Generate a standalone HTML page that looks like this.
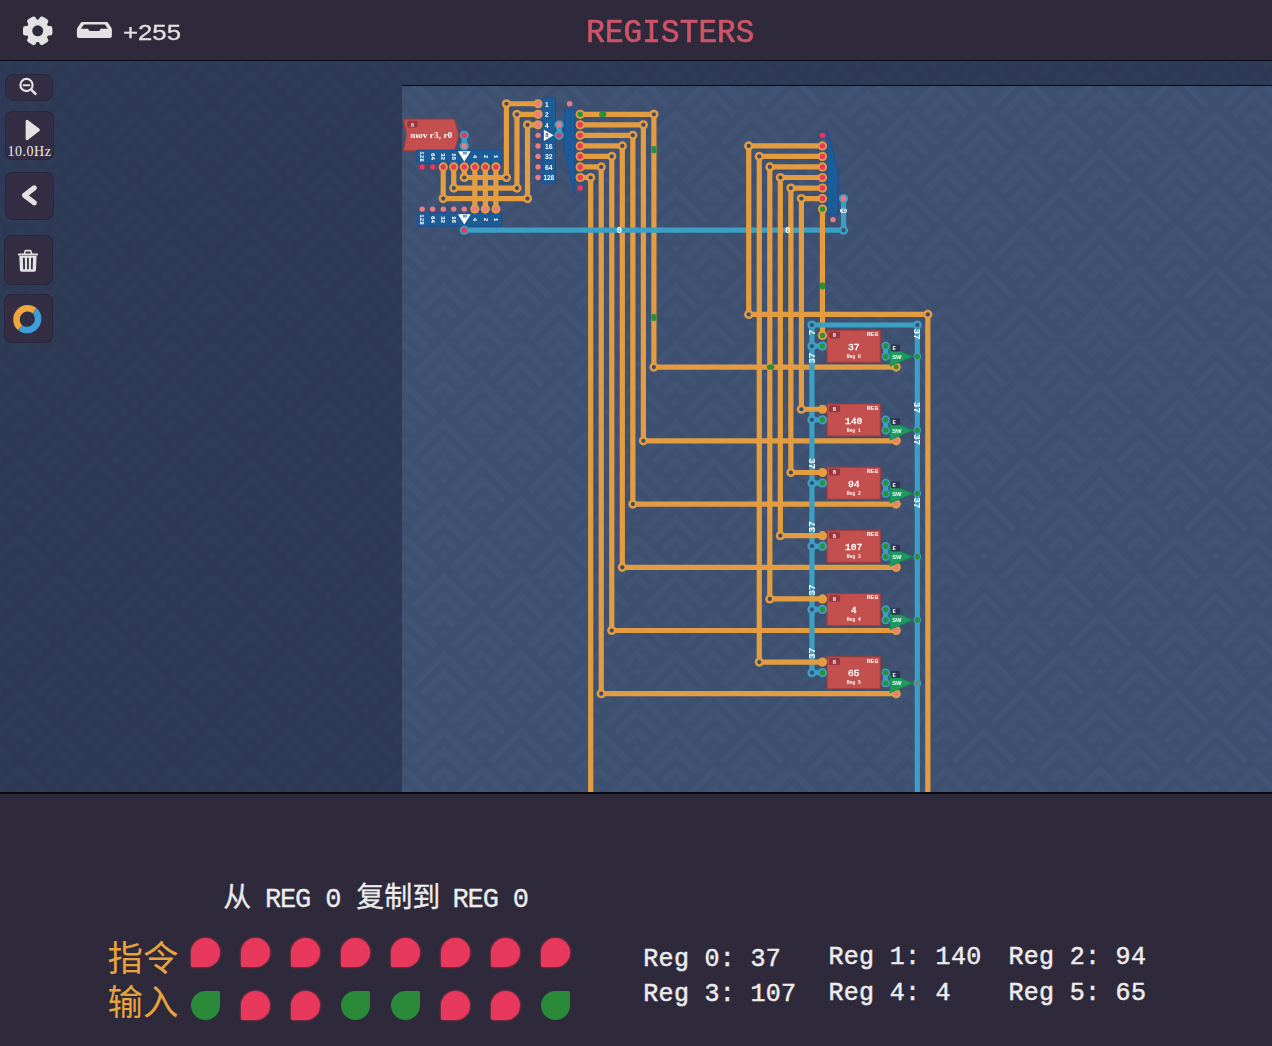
<!DOCTYPE html>
<html lang="zh">
<head>
<meta charset="utf-8">
<title>REGISTERS</title>
<style>
html,body{margin:0;padding:0;background:#2e2a3b;}
body{width:1272px;height:1046px;position:relative;overflow:hidden;font-family:"Liberation Sans","Noto Sans CJK SC",sans-serif;}
#hdr{position:absolute;left:0;top:0;width:1272px;height:60px;background:#2e2a3b;border-bottom:1.5px solid #0c0b12;box-sizing:content-box;}
#title{position:absolute;left:586.2px;top:16.3px;font-family:"Liberation Mono",monospace;font-weight:normal;-webkit-text-stroke:0.65px #cf5468;font-size:31px;letter-spacing:0.1px;color:#cf5468;line-height:36px;transform:scaleY(1.05);transform-origin:50% 50%;}
#score{position:absolute;left:123px;top:17.8px;font-size:22px;-webkit-text-stroke:0.3px #e2e2e2;transform:scaleX(1.17);transform-origin:0 50%;color:#e2e2e2;line-height:30px;}
#canvas{position:absolute;left:0;top:61px;width:1272px;height:732px;}
#bottom{position:absolute;left:0;top:792px;width:1272px;height:254px;background:#2e2a3b;border-top:2px solid #0b0a11;}
.btn{position:absolute;background:#332e43;border-radius:8px;box-shadow:inset 0 0 0 1px #2a2739;}
#hz{position:absolute;left:5.1px;width:48.7px;top:144.4px;text-align:center;font-family:"Liberation Serif",serif;font-size:14px;letter-spacing:0.55px;color:#ececec;line-height:16px;}
#desc{position:absolute;left:223.2px;top:881.8px;font-family:"Liberation Mono","Noto Sans CJK SC",monospace;font-size:27px;letter-spacing:-1.1px;-webkit-text-stroke:0.3px #ececec;color:#ececec;line-height:36px;white-space:pre;}
.cj{font-size:28px;letter-spacing:0;}
.lbl{position:absolute;left:107.6px;font-family:"Liberation Sans","Noto Sans CJK SC",sans-serif;font-size:35.4px;color:#e8a33d;line-height:44px;white-space:pre;}
.bit{position:absolute;width:29px;height:29px;}
.r{background:#e8395d;border-radius:50% 50% 50% 6%;box-shadow:0 0 2.5px #d8304f;}
.g{background:#2a8a3a;border-radius:50% 6% 50% 50%;}
.reg{position:absolute;font-family:"Liberation Mono",monospace;font-weight:normal;-webkit-text-stroke:0.5px #ececec;font-size:25px;letter-spacing:0.3px;color:#ececec;line-height:30px;white-space:pre;}
</style>
</head>
<body>
<div id="canvas">
<svg width="1272" height="732" viewBox="0 61 1272 732" style="position:absolute;left:0;top:0;display:block">
<defs>
<filter id="soft" x="0" y="0" width="1272" height="800" filterUnits="userSpaceOnUse"><feGaussianBlur stdDeviation="0.45"/></filter>
<pattern id="pd" patternUnits="userSpaceOnUse" x="57.8" y="36.6" width="77.2" height="77.2"><path d="M-30.10 30.10 L0.00 0.00 L30.10 30.10 M-20.80 39.90 L0.00 19.10 L20.80 39.90 M-11.10 49.30 L0.00 38.20 L11.10 49.30 M47.10 30.10 L77.20 0.00 L107.30 30.10 M56.40 39.90 L77.20 19.10 L98.00 39.90 M66.10 49.30 L77.20 38.20 L88.30 49.30 M-30.10 107.30 L0.00 77.20 L30.10 107.30 M-20.80 117.10 L0.00 96.30 L20.80 117.10 M-11.10 126.50 L0.00 115.40 L11.10 126.50 M47.10 107.30 L77.20 77.20 L107.30 107.30 M56.40 117.10 L77.20 96.30 L98.00 117.10 M66.10 126.50 L77.20 115.40 L88.30 126.50 M-30.10 -47.10 L0.00 -77.20 L30.10 -47.10 M-20.80 -37.30 L0.00 -58.10 L20.80 -37.30 M-11.10 -27.90 L0.00 -39.00 L11.10 -27.90 M47.10 -47.10 L77.20 -77.20 L107.30 -47.10 M56.40 -37.30 L77.20 -58.10 L98.00 -37.30 M66.10 -27.90 L77.20 -39.00 L88.30 -27.90 M8.50 68.70 L38.60 38.60 L68.70 68.70 M17.80 78.50 L38.60 57.70 L59.40 78.50 M27.50 87.90 L38.60 76.80 L49.70 87.90 M8.50 -8.50 L38.60 -38.60 L68.70 -8.50 M17.80 1.30 L38.60 -19.50 L59.40 1.30 M27.50 10.70 L38.60 -0.40 L49.70 10.70 M-68.70 68.70 L-38.60 38.60 L-8.50 68.70 M-59.40 78.50 L-38.60 57.70 L-17.80 78.50 M-49.70 87.90 L-38.60 76.80 L-27.50 87.90 M85.70 68.70 L115.80 38.60 L145.90 68.70 M95.00 78.50 L115.80 57.70 L136.60 78.50 M104.70 87.90 L115.80 76.80 L126.90 87.90 M8.50 145.90 L38.60 115.80 L68.70 145.90 M17.80 155.70 L38.60 134.90 L59.40 155.70 M27.50 165.10 L38.60 154.00 L49.70 165.10 M-68.70 -8.50 L-38.60 -38.60 L-8.50 -8.50 M-59.40 1.30 L-38.60 -19.50 L-17.80 1.30 M-49.70 10.70 L-38.60 -0.40 L-27.50 10.70 M85.70 -8.50 L115.80 -38.60 L145.90 -8.50 M95.00 1.30 L115.80 -19.50 L136.60 1.30 M104.70 10.70 L115.80 -0.40 L126.90 10.70" fill="none" stroke="#2f3c57" stroke-width="6.2" stroke-linejoin="miter" stroke-linecap="butt"/><g fill="#2f3c57"><rect x="-3.00" y="53.80" width="6" height="6" transform="rotate(45 0.00 56.80)"/><rect x="74.20" y="53.80" width="6" height="6" transform="rotate(45 77.20 56.80)"/><rect x="-3.00" y="131.00" width="6" height="6" transform="rotate(45 0.00 134.00)"/><rect x="74.20" y="131.00" width="6" height="6" transform="rotate(45 77.20 134.00)"/><rect x="-3.00" y="-23.40" width="6" height="6" transform="rotate(45 0.00 -20.40)"/><rect x="74.20" y="-23.40" width="6" height="6" transform="rotate(45 77.20 -20.40)"/><rect x="35.60" y="92.40" width="6" height="6" transform="rotate(45 38.60 95.40)"/><rect x="35.60" y="15.20" width="6" height="6" transform="rotate(45 38.60 18.20)"/><rect x="-41.60" y="92.40" width="6" height="6" transform="rotate(45 -38.60 95.40)"/><rect x="112.80" y="92.40" width="6" height="6" transform="rotate(45 115.80 95.40)"/><rect x="35.60" y="169.60" width="6" height="6" transform="rotate(45 38.60 172.60)"/><rect x="-41.60" y="15.20" width="6" height="6" transform="rotate(45 -38.60 18.20)"/><rect x="112.80" y="15.20" width="6" height="6" transform="rotate(45 115.80 18.20)"/></g></pattern>
<pattern id="pl" patternUnits="userSpaceOnUse" x="57.8" y="36.6" width="77.2" height="77.2"><path d="M-30.10 30.10 L0.00 0.00 L30.10 30.10 M-20.80 39.90 L0.00 19.10 L20.80 39.90 M-11.10 49.30 L0.00 38.20 L11.10 49.30 M47.10 30.10 L77.20 0.00 L107.30 30.10 M56.40 39.90 L77.20 19.10 L98.00 39.90 M66.10 49.30 L77.20 38.20 L88.30 49.30 M-30.10 107.30 L0.00 77.20 L30.10 107.30 M-20.80 117.10 L0.00 96.30 L20.80 117.10 M-11.10 126.50 L0.00 115.40 L11.10 126.50 M47.10 107.30 L77.20 77.20 L107.30 107.30 M56.40 117.10 L77.20 96.30 L98.00 117.10 M66.10 126.50 L77.20 115.40 L88.30 126.50 M-30.10 -47.10 L0.00 -77.20 L30.10 -47.10 M-20.80 -37.30 L0.00 -58.10 L20.80 -37.30 M-11.10 -27.90 L0.00 -39.00 L11.10 -27.90 M47.10 -47.10 L77.20 -77.20 L107.30 -47.10 M56.40 -37.30 L77.20 -58.10 L98.00 -37.30 M66.10 -27.90 L77.20 -39.00 L88.30 -27.90 M8.50 68.70 L38.60 38.60 L68.70 68.70 M17.80 78.50 L38.60 57.70 L59.40 78.50 M27.50 87.90 L38.60 76.80 L49.70 87.90 M8.50 -8.50 L38.60 -38.60 L68.70 -8.50 M17.80 1.30 L38.60 -19.50 L59.40 1.30 M27.50 10.70 L38.60 -0.40 L49.70 10.70 M-68.70 68.70 L-38.60 38.60 L-8.50 68.70 M-59.40 78.50 L-38.60 57.70 L-17.80 78.50 M-49.70 87.90 L-38.60 76.80 L-27.50 87.90 M85.70 68.70 L115.80 38.60 L145.90 68.70 M95.00 78.50 L115.80 57.70 L136.60 78.50 M104.70 87.90 L115.80 76.80 L126.90 87.90 M8.50 145.90 L38.60 115.80 L68.70 145.90 M17.80 155.70 L38.60 134.90 L59.40 155.70 M27.50 165.10 L38.60 154.00 L49.70 165.10 M-68.70 -8.50 L-38.60 -38.60 L-8.50 -8.50 M-59.40 1.30 L-38.60 -19.50 L-17.80 1.30 M-49.70 10.70 L-38.60 -0.40 L-27.50 10.70 M85.70 -8.50 L115.80 -38.60 L145.90 -8.50 M95.00 1.30 L115.80 -19.50 L136.60 1.30 M104.70 10.70 L115.80 -0.40 L126.90 10.70" fill="none" stroke="#425476" stroke-width="6.2" stroke-linejoin="miter" stroke-linecap="butt"/><g fill="#425476"><rect x="-3.00" y="53.80" width="6" height="6" transform="rotate(45 0.00 56.80)"/><rect x="74.20" y="53.80" width="6" height="6" transform="rotate(45 77.20 56.80)"/><rect x="-3.00" y="131.00" width="6" height="6" transform="rotate(45 0.00 134.00)"/><rect x="74.20" y="131.00" width="6" height="6" transform="rotate(45 77.20 134.00)"/><rect x="-3.00" y="-23.40" width="6" height="6" transform="rotate(45 0.00 -20.40)"/><rect x="74.20" y="-23.40" width="6" height="6" transform="rotate(45 77.20 -20.40)"/><rect x="35.60" y="92.40" width="6" height="6" transform="rotate(45 38.60 95.40)"/><rect x="35.60" y="15.20" width="6" height="6" transform="rotate(45 38.60 18.20)"/><rect x="-41.60" y="92.40" width="6" height="6" transform="rotate(45 -38.60 95.40)"/><rect x="112.80" y="92.40" width="6" height="6" transform="rotate(45 115.80 95.40)"/><rect x="35.60" y="169.60" width="6" height="6" transform="rotate(45 38.60 172.60)"/><rect x="-41.60" y="15.20" width="6" height="6" transform="rotate(45 -38.60 18.20)"/><rect x="112.80" y="15.20" width="6" height="6" transform="rotate(45 115.80 18.20)"/></g></pattern>
</defs>
<rect x="0" y="61" width="1272" height="732" fill="#2e3a55"/>
<rect x="0" y="61" width="1272" height="732" fill="url(#pd)"/>
<rect x="402" y="84.9" width="900" height="3" fill="#0e111c"/>
<rect x="402" y="86.1" width="900" height="720" fill="#3e5070"/>
<rect x="402" y="86.1" width="900" height="720" fill="url(#pl)"/>
<g filter="url(#soft)">
<g id="w-orange-a">
<path d="M443.21 166.96 L443.21 198.56 L527.49 198.56 L527.49 124.82 L538.03 124.82" fill="none" stroke="#e39d41" stroke-width="5.2" stroke-linejoin="round" stroke-linecap="butt"/>
<path d="M453.75 166.96 L453.75 188.03 L516.96 188.03 L516.96 114.28 L538.03 114.28" fill="none" stroke="#e39d41" stroke-width="5.2" stroke-linejoin="round" stroke-linecap="butt"/>
<path d="M464.28 166.96 L464.28 177.49 L506.42 177.49 L506.42 103.75 L538.03 103.75" fill="none" stroke="#e39d41" stroke-width="5.2" stroke-linejoin="round" stroke-linecap="butt"/>
<path d="M474.82 166.96 L474.82 209.10" fill="none" stroke="#e39d41" stroke-width="5.2" stroke-linejoin="round" stroke-linecap="butt"/>
<path d="M485.35 166.96 L485.35 209.10" fill="none" stroke="#e39d41" stroke-width="5.2" stroke-linejoin="round" stroke-linecap="butt"/>
<path d="M495.89 166.96 L495.89 209.10" fill="none" stroke="#e39d41" stroke-width="5.2" stroke-linejoin="round" stroke-linecap="butt"/>
<circle cx="443.21" cy="198.56" r="4.6" fill="#e39d41"/>
<circle cx="443.21" cy="198.56" r="2.1" fill="#3d4b6c"/>
<circle cx="527.49" cy="198.56" r="4.6" fill="#e39d41"/>
<circle cx="527.49" cy="198.56" r="2.1" fill="#3d4b6c"/>
<circle cx="527.49" cy="124.82" r="4.6" fill="#e39d41"/>
<circle cx="527.49" cy="124.82" r="2.1" fill="#3d4b6c"/>
<circle cx="453.75" cy="188.03" r="4.6" fill="#e39d41"/>
<circle cx="453.75" cy="188.03" r="2.1" fill="#3d4b6c"/>
<circle cx="516.96" cy="188.03" r="4.6" fill="#e39d41"/>
<circle cx="516.96" cy="188.03" r="2.1" fill="#3d4b6c"/>
<circle cx="516.96" cy="114.28" r="4.6" fill="#e39d41"/>
<circle cx="516.96" cy="114.28" r="2.1" fill="#3d4b6c"/>
<circle cx="464.28" cy="177.49" r="4.6" fill="#e39d41"/>
<circle cx="464.28" cy="177.49" r="2.1" fill="#3d4b6c"/>
<circle cx="506.42" cy="177.49" r="4.6" fill="#e39d41"/>
<circle cx="506.42" cy="177.49" r="2.1" fill="#3d4b6c"/>
<circle cx="506.42" cy="103.75" r="4.6" fill="#e39d41"/>
<circle cx="506.42" cy="103.75" r="2.1" fill="#3d4b6c"/>
<path d="M580.17 114.28 L653.91 114.28 L653.91 367.12 L896.22 367.12" fill="none" stroke="#e39d41" stroke-width="5.2" stroke-linejoin="round" stroke-linecap="butt"/>
<circle cx="653.91" cy="114.28" r="4.6" fill="#e39d41"/>
<circle cx="653.91" cy="114.28" r="2.1" fill="#3d4b6c"/>
<circle cx="653.91" cy="367.12" r="4.6" fill="#e39d41"/>
<circle cx="653.91" cy="367.12" r="2.1" fill="#3d4b6c"/>
<path d="M580.17 124.82 L643.38 124.82 L643.38 440.87 L896.22 440.87" fill="none" stroke="#e39d41" stroke-width="5.2" stroke-linejoin="round" stroke-linecap="butt"/>
<circle cx="643.38" cy="124.82" r="4.6" fill="#e39d41"/>
<circle cx="643.38" cy="124.82" r="2.1" fill="#3d4b6c"/>
<circle cx="643.38" cy="440.87" r="4.6" fill="#e39d41"/>
<circle cx="643.38" cy="440.87" r="2.1" fill="#3d4b6c"/>
<path d="M580.17 135.35 L632.84 135.35 L632.84 504.08 L896.22 504.08" fill="none" stroke="#e39d41" stroke-width="5.2" stroke-linejoin="round" stroke-linecap="butt"/>
<circle cx="632.84" cy="135.35" r="4.6" fill="#e39d41"/>
<circle cx="632.84" cy="135.35" r="2.1" fill="#3d4b6c"/>
<circle cx="632.84" cy="504.08" r="4.6" fill="#e39d41"/>
<circle cx="632.84" cy="504.08" r="2.1" fill="#3d4b6c"/>
<path d="M580.17 145.89 L622.31 145.89 L622.31 567.29 L896.22 567.29" fill="none" stroke="#e39d41" stroke-width="5.2" stroke-linejoin="round" stroke-linecap="butt"/>
<circle cx="622.31" cy="145.89" r="4.6" fill="#e39d41"/>
<circle cx="622.31" cy="145.89" r="2.1" fill="#3d4b6c"/>
<circle cx="622.31" cy="567.29" r="4.6" fill="#e39d41"/>
<circle cx="622.31" cy="567.29" r="2.1" fill="#3d4b6c"/>
<path d="M580.17 156.42 L611.77 156.42 L611.77 630.50 L896.22 630.50" fill="none" stroke="#e39d41" stroke-width="5.2" stroke-linejoin="round" stroke-linecap="butt"/>
<circle cx="611.77" cy="156.42" r="4.6" fill="#e39d41"/>
<circle cx="611.77" cy="156.42" r="2.1" fill="#3d4b6c"/>
<circle cx="611.77" cy="630.50" r="4.6" fill="#e39d41"/>
<circle cx="611.77" cy="630.50" r="2.1" fill="#3d4b6c"/>
<path d="M580.17 166.96 L601.24 166.96 L601.24 693.71 L896.22 693.71" fill="none" stroke="#e39d41" stroke-width="5.2" stroke-linejoin="round" stroke-linecap="butt"/>
<circle cx="601.24" cy="166.96" r="4.6" fill="#e39d41"/>
<circle cx="601.24" cy="166.96" r="2.1" fill="#3d4b6c"/>
<circle cx="601.24" cy="693.71" r="4.6" fill="#e39d41"/>
<circle cx="601.24" cy="693.71" r="2.1" fill="#3d4b6c"/>
<path d="M580.17 177.49 L590.70 177.49 L590.70 794.00" fill="none" stroke="#e39d41" stroke-width="5.2" stroke-linejoin="round" stroke-linecap="butt"/>
<circle cx="590.70" cy="177.49" r="4.6" fill="#e39d41"/>
<circle cx="590.70" cy="177.49" r="2.1" fill="#3d4b6c"/>
</g>
<g id="w-cyan-a">
<path d="M464.28 230.17 L843.54 230.17 L843.54 198.56" fill="none" stroke="#3aa0c4" stroke-width="5.2" stroke-linejoin="round" stroke-linecap="butt"/>
<circle cx="843.54" cy="230.17" r="4.6" fill="#3aa0c4"/>
<circle cx="843.54" cy="230.17" r="2.1" fill="#3d4b6c"/>
</g>
<g id="w-orange-a2">
<path d="M822.47 209.10 L822.47 335.52" fill="none" stroke="#e39d41" stroke-width="5.2" stroke-linejoin="round" stroke-linecap="butt"/>
<path d="M748.73 145.89 L748.73 314.45 L927.82 314.45 L927.82 794.00" fill="none" stroke="#e39d41" stroke-width="5.2" stroke-linejoin="round" stroke-linecap="butt"/>
<path d="M822.47 145.89 L748.73 145.89" fill="none" stroke="#e39d41" stroke-width="5.2" stroke-linejoin="round" stroke-linecap="butt"/>
<circle cx="748.73" cy="145.89" r="4.6" fill="#e39d41"/>
<circle cx="748.73" cy="145.89" r="2.1" fill="#3d4b6c"/>
<circle cx="748.73" cy="314.45" r="4.6" fill="#e39d41"/>
<circle cx="748.73" cy="314.45" r="2.1" fill="#3d4b6c"/>
<circle cx="927.82" cy="314.45" r="4.6" fill="#e39d41"/>
<circle cx="927.82" cy="314.45" r="2.1" fill="#3d4b6c"/>
</g>
<g id="w-cyan-b">
<path d="M811.94 672.64 L811.94 324.99 L917.29 324.99 L917.29 794.00" fill="none" stroke="#3aa0c4" stroke-width="5.2" stroke-linejoin="round" stroke-linecap="butt"/>
<path d="M811.94 346.06 L822.47 346.06" fill="none" stroke="#3aa0c4" stroke-width="5.2" stroke-linejoin="round" stroke-linecap="butt"/>
<path d="M885.68 346.06 L885.68 356.59" fill="none" stroke="#3aa0c4" stroke-width="5.2" stroke-linejoin="round" stroke-linecap="butt"/>
<path d="M811.94 419.80 L822.47 419.80" fill="none" stroke="#3aa0c4" stroke-width="5.2" stroke-linejoin="round" stroke-linecap="butt"/>
<path d="M885.68 419.80 L885.68 430.33" fill="none" stroke="#3aa0c4" stroke-width="5.2" stroke-linejoin="round" stroke-linecap="butt"/>
<path d="M811.94 483.01 L822.47 483.01" fill="none" stroke="#3aa0c4" stroke-width="5.2" stroke-linejoin="round" stroke-linecap="butt"/>
<path d="M885.68 483.01 L885.68 493.54" fill="none" stroke="#3aa0c4" stroke-width="5.2" stroke-linejoin="round" stroke-linecap="butt"/>
<path d="M811.94 546.22 L822.47 546.22" fill="none" stroke="#3aa0c4" stroke-width="5.2" stroke-linejoin="round" stroke-linecap="butt"/>
<path d="M885.68 546.22 L885.68 556.75" fill="none" stroke="#3aa0c4" stroke-width="5.2" stroke-linejoin="round" stroke-linecap="butt"/>
<path d="M811.94 609.43 L822.47 609.43" fill="none" stroke="#3aa0c4" stroke-width="5.2" stroke-linejoin="round" stroke-linecap="butt"/>
<path d="M885.68 609.43 L885.68 619.96" fill="none" stroke="#3aa0c4" stroke-width="5.2" stroke-linejoin="round" stroke-linecap="butt"/>
<path d="M811.94 672.64 L822.47 672.64" fill="none" stroke="#3aa0c4" stroke-width="5.2" stroke-linejoin="round" stroke-linecap="butt"/>
<path d="M885.68 672.64 L885.68 683.17" fill="none" stroke="#3aa0c4" stroke-width="5.2" stroke-linejoin="round" stroke-linecap="butt"/>
<circle cx="811.94" cy="324.99" r="4.6" fill="#3aa0c4"/>
<circle cx="811.94" cy="324.99" r="2.1" fill="#3d4b6c"/>
<circle cx="917.29" cy="324.99" r="4.6" fill="#3aa0c4"/>
<circle cx="917.29" cy="324.99" r="2.1" fill="#3d4b6c"/>
<circle cx="811.94" cy="346.06" r="4.6" fill="#3aa0c4"/>
<circle cx="811.94" cy="346.06" r="2.1" fill="#3d4b6c"/>
<circle cx="811.94" cy="419.80" r="4.6" fill="#3aa0c4"/>
<circle cx="811.94" cy="419.80" r="2.1" fill="#3d4b6c"/>
<circle cx="811.94" cy="483.01" r="4.6" fill="#3aa0c4"/>
<circle cx="811.94" cy="483.01" r="2.1" fill="#3d4b6c"/>
<circle cx="811.94" cy="546.22" r="4.6" fill="#3aa0c4"/>
<circle cx="811.94" cy="546.22" r="2.1" fill="#3d4b6c"/>
<circle cx="811.94" cy="609.43" r="4.6" fill="#3aa0c4"/>
<circle cx="811.94" cy="609.43" r="2.1" fill="#3d4b6c"/>
<circle cx="811.94" cy="672.64" r="4.6" fill="#3aa0c4"/>
<circle cx="811.94" cy="672.64" r="2.1" fill="#3d4b6c"/>
</g>
<g id="w-orange-b">
<path d="M822.47 198.56 L801.40 198.56 L801.40 409.26 L822.47 409.26" fill="none" stroke="#e39d41" stroke-width="5.2" stroke-linejoin="round" stroke-linecap="butt"/>
<circle cx="801.40" cy="198.56" r="4.6" fill="#e39d41"/>
<circle cx="801.40" cy="198.56" r="2.1" fill="#3d4b6c"/>
<circle cx="801.40" cy="409.26" r="4.6" fill="#e39d41"/>
<circle cx="801.40" cy="409.26" r="2.1" fill="#3d4b6c"/>
<path d="M822.47 188.03 L790.87 188.03 L790.87 472.48 L822.47 472.48" fill="none" stroke="#e39d41" stroke-width="5.2" stroke-linejoin="round" stroke-linecap="butt"/>
<circle cx="790.87" cy="188.03" r="4.6" fill="#e39d41"/>
<circle cx="790.87" cy="188.03" r="2.1" fill="#3d4b6c"/>
<circle cx="790.87" cy="472.48" r="4.6" fill="#e39d41"/>
<circle cx="790.87" cy="472.48" r="2.1" fill="#3d4b6c"/>
<path d="M822.47 177.49 L780.33 177.49 L780.33 535.68 L822.47 535.68" fill="none" stroke="#e39d41" stroke-width="5.2" stroke-linejoin="round" stroke-linecap="butt"/>
<circle cx="780.33" cy="177.49" r="4.6" fill="#e39d41"/>
<circle cx="780.33" cy="177.49" r="2.1" fill="#3d4b6c"/>
<circle cx="780.33" cy="535.68" r="4.6" fill="#e39d41"/>
<circle cx="780.33" cy="535.68" r="2.1" fill="#3d4b6c"/>
<path d="M822.47 166.96 L769.80 166.96 L769.80 598.89 L822.47 598.89" fill="none" stroke="#e39d41" stroke-width="5.2" stroke-linejoin="round" stroke-linecap="butt"/>
<circle cx="769.80" cy="166.96" r="4.6" fill="#e39d41"/>
<circle cx="769.80" cy="166.96" r="2.1" fill="#3d4b6c"/>
<circle cx="769.80" cy="598.89" r="4.6" fill="#e39d41"/>
<circle cx="769.80" cy="598.89" r="2.1" fill="#3d4b6c"/>
<path d="M822.47 156.42 L759.26 156.42 L759.26 662.11 L822.47 662.11" fill="none" stroke="#e39d41" stroke-width="5.2" stroke-linejoin="round" stroke-linecap="butt"/>
<circle cx="759.26" cy="156.42" r="4.6" fill="#e39d41"/>
<circle cx="759.26" cy="156.42" r="2.1" fill="#3d4b6c"/>
<circle cx="759.26" cy="662.11" r="4.6" fill="#e39d41"/>
<circle cx="759.26" cy="662.11" r="2.1" fill="#3d4b6c"/>
</g>
<g id="w-cyan-c">
<path d="M464.28 135.35 L464.28 145.89" fill="none" stroke="#3aa0c4" stroke-width="5.2" stroke-linejoin="round" stroke-linecap="butt"/>
<path d="M559.10 124.82 L559.10 135.35" fill="none" stroke="#3aa0c4" stroke-width="5.2" stroke-linejoin="round" stroke-linecap="butt"/>
</g>
<g id="marks" fill="#2e8f3a">
<rect x="599.2" y="111.7" width="7.2" height="5.2" rx="2"/>
<rect x="651.3" y="146.0" width="5.2" height="7.2" rx="2"/>
<rect x="651.3" y="313.9" width="5.2" height="7.2" rx="2"/>
<rect x="767.0" y="364.5" width="7.2" height="5.2" rx="2"/>
<rect x="819.9" y="282.4" width="5.2" height="7.2" rx="2"/>
</g>
<g id="prerings">
<circle cx="896.22" cy="367.12" r="4.6" fill="#e39d41"/>
<circle cx="896.22" cy="440.87" r="4.6" fill="#e39d41"/>
<circle cx="896.22" cy="504.08" r="4.6" fill="#e39d41"/>
<circle cx="896.22" cy="567.29" r="4.6" fill="#e39d41"/>
<circle cx="896.22" cy="630.50" r="4.6" fill="#e39d41"/>
<circle cx="896.22" cy="693.71" r="4.6" fill="#e39d41"/>
</g>
<g id="components">
<polygon points="403.3,119.1 454.3,119.1 458.8,135.1 454.5,150.7 403.3,150.7 406.5,135.1" fill="#c44f4f" stroke="#a33a3a" stroke-width="1"/>
<rect x="407.4" y="120.8" width="10.3" height="7" rx="1.5" fill="#96373f"/>
<text x="412.5" y="126.8" font-family="'Liberation Serif',serif" font-size="6.6" fill="#f4dede" text-anchor="middle" font-weight="bold">8</text>
<text x="410.3" y="138.3" font-family="'Liberation Serif',serif" font-size="8.6" fill="#fff" font-weight="bold" textLength="42" lengthAdjust="spacingAndGlyphs">mov r3, r0</text>
<rect x="416.9" y="150.0" width="84.8" height="13.2" fill="#1f5d97" stroke="#1c4a9c" stroke-width="0.8"/>
<text transform="translate(420.2,156.6) rotate(90)" font-family="'Liberation Mono',monospace" font-size="5.6" fill="#fff" font-weight="bold" text-anchor="middle" textLength="10.5" lengthAdjust="spacingAndGlyphs">128</text>
<text transform="translate(430.8,156.6) rotate(90)" font-family="'Liberation Mono',monospace" font-size="5.6" fill="#fff" font-weight="bold" text-anchor="middle" textLength="7.2" lengthAdjust="spacingAndGlyphs">64</text>
<text transform="translate(441.3,156.6) rotate(90)" font-family="'Liberation Mono',monospace" font-size="5.6" fill="#fff" font-weight="bold" text-anchor="middle" textLength="7.2" lengthAdjust="spacingAndGlyphs">32</text>
<text transform="translate(451.9,156.6) rotate(90)" font-family="'Liberation Mono',monospace" font-size="5.6" fill="#fff" font-weight="bold" text-anchor="middle" textLength="7.2" lengthAdjust="spacingAndGlyphs">16</text>
<polygon points="457.9,151.2 470.7,151.2 464.3,161.6" fill="#fff"/>
<text transform="translate(462.5,153.2) rotate(90)" font-family="'Liberation Mono',monospace" font-size="5" fill="#1f5d97" font-weight="bold" text-anchor="middle">8</text>
<text transform="translate(472.9,156.6) rotate(90)" font-family="'Liberation Mono',monospace" font-size="5.6" fill="#fff" font-weight="bold" text-anchor="middle" textLength="3.6" lengthAdjust="spacingAndGlyphs">4</text>
<text transform="translate(483.5,156.6) rotate(90)" font-family="'Liberation Mono',monospace" font-size="5.6" fill="#fff" font-weight="bold" text-anchor="middle" textLength="3.6" lengthAdjust="spacingAndGlyphs">2</text>
<text transform="translate(494.0,156.6) rotate(90)" font-family="'Liberation Mono',monospace" font-size="5.6" fill="#fff" font-weight="bold" text-anchor="middle" textLength="3.6" lengthAdjust="spacingAndGlyphs">1</text>
<rect x="416.9" y="213.0" width="84.8" height="13.2" fill="#1f5d97" stroke="#1c4a9c" stroke-width="0.8"/>
<text transform="translate(420.2,219.6) rotate(90)" font-family="'Liberation Mono',monospace" font-size="5.6" fill="#fff" font-weight="bold" text-anchor="middle" textLength="10.5" lengthAdjust="spacingAndGlyphs">128</text>
<text transform="translate(430.8,219.6) rotate(90)" font-family="'Liberation Mono',monospace" font-size="5.6" fill="#fff" font-weight="bold" text-anchor="middle" textLength="7.2" lengthAdjust="spacingAndGlyphs">64</text>
<text transform="translate(441.3,219.6) rotate(90)" font-family="'Liberation Mono',monospace" font-size="5.6" fill="#fff" font-weight="bold" text-anchor="middle" textLength="7.2" lengthAdjust="spacingAndGlyphs">32</text>
<text transform="translate(451.9,219.6) rotate(90)" font-family="'Liberation Mono',monospace" font-size="5.6" fill="#fff" font-weight="bold" text-anchor="middle" textLength="7.2" lengthAdjust="spacingAndGlyphs">16</text>
<polygon points="457.9,214.2 470.7,214.2 464.3,224.6" fill="#fff"/>
<text transform="translate(462.5,216.2) rotate(90)" font-family="'Liberation Mono',monospace" font-size="5" fill="#1f5d97" font-weight="bold" text-anchor="middle">8</text>
<text transform="translate(472.9,219.6) rotate(90)" font-family="'Liberation Mono',monospace" font-size="5.6" fill="#fff" font-weight="bold" text-anchor="middle" textLength="3.6" lengthAdjust="spacingAndGlyphs">4</text>
<text transform="translate(483.5,219.6) rotate(90)" font-family="'Liberation Mono',monospace" font-size="5.6" fill="#fff" font-weight="bold" text-anchor="middle" textLength="3.6" lengthAdjust="spacingAndGlyphs">2</text>
<text transform="translate(494.0,219.6) rotate(90)" font-family="'Liberation Mono',monospace" font-size="5.6" fill="#fff" font-weight="bold" text-anchor="middle" textLength="3.6" lengthAdjust="spacingAndGlyphs">1</text>
<rect x="542.3" y="97.9" width="13.2" height="85.2" fill="#1f5d97" stroke="#1c4a9c" stroke-width="0.8"/>
<text x="545.0" y="106.5" font-family="'Liberation Sans',sans-serif" font-size="7.6" fill="#fff" font-weight="bold" textLength="3.6" lengthAdjust="spacingAndGlyphs">1</text>
<text x="545.0" y="117.0" font-family="'Liberation Sans',sans-serif" font-size="7.6" fill="#fff" font-weight="bold" textLength="3.6" lengthAdjust="spacingAndGlyphs">2</text>
<text x="545.0" y="127.5" font-family="'Liberation Sans',sans-serif" font-size="7.6" fill="#fff" font-weight="bold" textLength="3.6" lengthAdjust="spacingAndGlyphs">4</text>
<polygon points="543.9,129.8 543.9,140.9 553.6,135.3" fill="#fff"/>
<text x="547" y="137.4" font-family="'Liberation Sans',sans-serif" font-size="6" fill="#1f5d97" font-weight="bold" text-anchor="middle">8</text>
<text x="544.9" y="148.6" font-family="'Liberation Sans',sans-serif" font-size="7.6" fill="#fff" font-weight="bold" textLength="7.6" lengthAdjust="spacingAndGlyphs">16</text>
<text x="544.9" y="159.1" font-family="'Liberation Sans',sans-serif" font-size="7.6" fill="#fff" font-weight="bold" textLength="7.6" lengthAdjust="spacingAndGlyphs">32</text>
<text x="544.9" y="169.7" font-family="'Liberation Sans',sans-serif" font-size="7.6" fill="#fff" font-weight="bold" textLength="7.6" lengthAdjust="spacingAndGlyphs">64</text>
<text x="543.5" y="180.2" font-family="'Liberation Sans',sans-serif" font-size="7.6" fill="#fff" font-weight="bold" textLength="10.6" lengthAdjust="spacingAndGlyphs">128</text>
<polygon points="564.4,109.1 575,109.1 575,193.6 574.2,193.6 564.4,152.6" fill="#1f5d97" stroke="#1c4a9c" stroke-width="0.8"/>
<polygon points="827,129.9 838.2,170.9 838.2,214.4 827,214.4" fill="#1f5d97" stroke="#1c4a9c" stroke-width="0.8"/>
<rect x="827.1" y="330.22" width="53.2" height="32" fill="#c44f4f" stroke="#a33a3a" stroke-width="1"/>
<rect x="828.8" y="331.52" width="11.3" height="6.9" rx="1.6" fill="#96373f"/>
<text x="834.4" y="337.42" font-family="'Liberation Serif',serif" font-size="6.4" fill="#fff" text-anchor="middle" font-weight="bold">8</text>
<text x="878.3" y="336.12" font-family="'Liberation Mono',monospace" font-size="4.6" fill="#fff" text-anchor="end" font-weight="bold" textLength="11.6" lengthAdjust="spacingAndGlyphs">REG</text>
<text x="853.7" y="349.82" font-family="'Liberation Mono',monospace" font-size="9.7" fill="#fff" stroke="#fff" stroke-width="0.35" text-anchor="middle">37</text>
<text x="853.7" y="357.82" font-family="'Liberation Mono',monospace" font-size="4.7" fill="#fff" text-anchor="middle" font-weight="bold">Reg 0</text>
<polygon points="889.4,346.99 912.8,356.59 890.2,366.19" fill="#1f9a60" stroke="#17834d" stroke-width="0.8" stroke-linejoin="round"/>
<rect x="890.7" y="344.49" width="9.6" height="6.9" rx="1.5" fill="#2f3652"/>
<text x="894.3" y="349.99" font-family="'Liberation Mono',monospace" font-size="5.6" fill="#fff" text-anchor="middle" font-weight="bold">E</text>
<text x="896.9" y="358.79" font-family="'Liberation Sans',sans-serif" font-size="5.8" fill="#fff" text-anchor="middle" font-weight="bold">SW</text>
<rect x="827.1" y="403.96" width="53.2" height="32" fill="#c44f4f" stroke="#a33a3a" stroke-width="1"/>
<rect x="828.8" y="405.26" width="11.3" height="6.9" rx="1.6" fill="#96373f"/>
<text x="834.4" y="411.16" font-family="'Liberation Serif',serif" font-size="6.4" fill="#fff" text-anchor="middle" font-weight="bold">8</text>
<text x="878.3" y="409.86" font-family="'Liberation Mono',monospace" font-size="4.6" fill="#fff" text-anchor="end" font-weight="bold" textLength="11.6" lengthAdjust="spacingAndGlyphs">REG</text>
<text x="853.7" y="423.56" font-family="'Liberation Mono',monospace" font-size="9.7" fill="#fff" stroke="#fff" stroke-width="0.35" text-anchor="middle">140</text>
<text x="853.7" y="431.56" font-family="'Liberation Mono',monospace" font-size="4.7" fill="#fff" text-anchor="middle" font-weight="bold">Reg 1</text>
<polygon points="889.4,420.73 912.8,430.33 890.2,439.93" fill="#1f9a60" stroke="#17834d" stroke-width="0.8" stroke-linejoin="round"/>
<rect x="890.7" y="418.23" width="9.6" height="6.9" rx="1.5" fill="#2f3652"/>
<text x="894.3" y="423.73" font-family="'Liberation Mono',monospace" font-size="5.6" fill="#fff" text-anchor="middle" font-weight="bold">E</text>
<text x="896.9" y="432.53" font-family="'Liberation Sans',sans-serif" font-size="5.8" fill="#fff" text-anchor="middle" font-weight="bold">SW</text>
<rect x="827.1" y="467.18" width="53.2" height="32" fill="#c44f4f" stroke="#a33a3a" stroke-width="1"/>
<rect x="828.8" y="468.48" width="11.3" height="6.9" rx="1.6" fill="#96373f"/>
<text x="834.4" y="474.38" font-family="'Liberation Serif',serif" font-size="6.4" fill="#fff" text-anchor="middle" font-weight="bold">8</text>
<text x="878.3" y="473.08" font-family="'Liberation Mono',monospace" font-size="4.6" fill="#fff" text-anchor="end" font-weight="bold" textLength="11.6" lengthAdjust="spacingAndGlyphs">REG</text>
<text x="853.7" y="486.78" font-family="'Liberation Mono',monospace" font-size="9.7" fill="#fff" stroke="#fff" stroke-width="0.35" text-anchor="middle">94</text>
<text x="853.7" y="494.78" font-family="'Liberation Mono',monospace" font-size="4.7" fill="#fff" text-anchor="middle" font-weight="bold">Reg 2</text>
<polygon points="889.4,483.94 912.8,493.54 890.2,503.14" fill="#1f9a60" stroke="#17834d" stroke-width="0.8" stroke-linejoin="round"/>
<rect x="890.7" y="481.44" width="9.6" height="6.9" rx="1.5" fill="#2f3652"/>
<text x="894.3" y="486.94" font-family="'Liberation Mono',monospace" font-size="5.6" fill="#fff" text-anchor="middle" font-weight="bold">E</text>
<text x="896.9" y="495.74" font-family="'Liberation Sans',sans-serif" font-size="5.8" fill="#fff" text-anchor="middle" font-weight="bold">SW</text>
<rect x="827.1" y="530.38" width="53.2" height="32" fill="#c44f4f" stroke="#a33a3a" stroke-width="1"/>
<rect x="828.8" y="531.68" width="11.3" height="6.9" rx="1.6" fill="#96373f"/>
<text x="834.4" y="537.58" font-family="'Liberation Serif',serif" font-size="6.4" fill="#fff" text-anchor="middle" font-weight="bold">8</text>
<text x="878.3" y="536.28" font-family="'Liberation Mono',monospace" font-size="4.6" fill="#fff" text-anchor="end" font-weight="bold" textLength="11.6" lengthAdjust="spacingAndGlyphs">REG</text>
<text x="853.7" y="549.98" font-family="'Liberation Mono',monospace" font-size="9.7" fill="#fff" stroke="#fff" stroke-width="0.35" text-anchor="middle">107</text>
<text x="853.7" y="557.98" font-family="'Liberation Mono',monospace" font-size="4.7" fill="#fff" text-anchor="middle" font-weight="bold">Reg 3</text>
<polygon points="889.4,547.15 912.8,556.75 890.2,566.35" fill="#1f9a60" stroke="#17834d" stroke-width="0.8" stroke-linejoin="round"/>
<rect x="890.7" y="544.65" width="9.6" height="6.9" rx="1.5" fill="#2f3652"/>
<text x="894.3" y="550.15" font-family="'Liberation Mono',monospace" font-size="5.6" fill="#fff" text-anchor="middle" font-weight="bold">E</text>
<text x="896.9" y="558.95" font-family="'Liberation Sans',sans-serif" font-size="5.8" fill="#fff" text-anchor="middle" font-weight="bold">SW</text>
<rect x="827.1" y="593.59" width="53.2" height="32" fill="#c44f4f" stroke="#a33a3a" stroke-width="1"/>
<rect x="828.8" y="594.89" width="11.3" height="6.9" rx="1.6" fill="#96373f"/>
<text x="834.4" y="600.79" font-family="'Liberation Serif',serif" font-size="6.4" fill="#fff" text-anchor="middle" font-weight="bold">8</text>
<text x="878.3" y="599.49" font-family="'Liberation Mono',monospace" font-size="4.6" fill="#fff" text-anchor="end" font-weight="bold" textLength="11.6" lengthAdjust="spacingAndGlyphs">REG</text>
<text x="853.7" y="613.19" font-family="'Liberation Mono',monospace" font-size="9.7" fill="#fff" stroke="#fff" stroke-width="0.35" text-anchor="middle">4</text>
<text x="853.7" y="621.19" font-family="'Liberation Mono',monospace" font-size="4.7" fill="#fff" text-anchor="middle" font-weight="bold">Reg 4</text>
<polygon points="889.4,610.36 912.8,619.96 890.2,629.56" fill="#1f9a60" stroke="#17834d" stroke-width="0.8" stroke-linejoin="round"/>
<rect x="890.7" y="607.86" width="9.6" height="6.9" rx="1.5" fill="#2f3652"/>
<text x="894.3" y="613.36" font-family="'Liberation Mono',monospace" font-size="5.6" fill="#fff" text-anchor="middle" font-weight="bold">E</text>
<text x="896.9" y="622.16" font-family="'Liberation Sans',sans-serif" font-size="5.8" fill="#fff" text-anchor="middle" font-weight="bold">SW</text>
<rect x="827.1" y="656.81" width="53.2" height="32" fill="#c44f4f" stroke="#a33a3a" stroke-width="1"/>
<rect x="828.8" y="658.11" width="11.3" height="6.9" rx="1.6" fill="#96373f"/>
<text x="834.4" y="664.01" font-family="'Liberation Serif',serif" font-size="6.4" fill="#fff" text-anchor="middle" font-weight="bold">8</text>
<text x="878.3" y="662.71" font-family="'Liberation Mono',monospace" font-size="4.6" fill="#fff" text-anchor="end" font-weight="bold" textLength="11.6" lengthAdjust="spacingAndGlyphs">REG</text>
<text x="853.7" y="676.41" font-family="'Liberation Mono',monospace" font-size="9.7" fill="#fff" stroke="#fff" stroke-width="0.35" text-anchor="middle">65</text>
<text x="853.7" y="684.41" font-family="'Liberation Mono',monospace" font-size="4.7" fill="#fff" text-anchor="middle" font-weight="bold">Reg 5</text>
<polygon points="889.4,673.57 912.8,683.17 890.2,692.77" fill="#1f9a60" stroke="#17834d" stroke-width="0.8" stroke-linejoin="round"/>
<rect x="890.7" y="671.07" width="9.6" height="6.9" rx="1.5" fill="#2f3652"/>
<text x="894.3" y="676.57" font-family="'Liberation Mono',monospace" font-size="5.6" fill="#fff" text-anchor="middle" font-weight="bold">E</text>
<text x="896.9" y="685.37" font-family="'Liberation Sans',sans-serif" font-size="5.8" fill="#fff" text-anchor="middle" font-weight="bold">SW</text>
</g>
<g id="pins">
<circle cx="464.28" cy="135.35" r="4.6" fill="#3aa0c4"/>
<circle cx="464.28" cy="135.35" r="2.7" fill="#e8375b"/>
<circle cx="464.28" cy="145.89" r="4.6" fill="#3aa0c4"/>
<circle cx="464.28" cy="145.89" r="2.7" fill="#e97c86"/>
<circle cx="422.14" cy="166.96" r="2.7" fill="#e8375b"/>
<circle cx="432.68" cy="166.96" r="2.7" fill="#e8375b"/>
<circle cx="443.21" cy="166.96" r="4.6" fill="#e39d41"/>
<circle cx="443.21" cy="166.96" r="2.7" fill="#e8375b"/>
<circle cx="453.75" cy="166.96" r="4.6" fill="#e39d41"/>
<circle cx="453.75" cy="166.96" r="2.7" fill="#e8375b"/>
<circle cx="464.28" cy="166.96" r="4.6" fill="#e39d41"/>
<circle cx="464.28" cy="166.96" r="2.7" fill="#e8375b"/>
<circle cx="474.82" cy="166.96" r="4.6" fill="#e39d41"/>
<circle cx="474.82" cy="166.96" r="2.7" fill="#e8375b"/>
<circle cx="485.35" cy="166.96" r="4.6" fill="#e39d41"/>
<circle cx="485.35" cy="166.96" r="2.7" fill="#e8375b"/>
<circle cx="495.89" cy="166.96" r="4.6" fill="#e39d41"/>
<circle cx="495.89" cy="166.96" r="2.7" fill="#e8375b"/>
<circle cx="422.14" cy="209.10" r="2.7" fill="#e97c86"/>
<circle cx="432.68" cy="209.10" r="2.7" fill="#e97c86"/>
<circle cx="443.21" cy="209.10" r="2.7" fill="#e97c86"/>
<circle cx="453.75" cy="209.10" r="2.7" fill="#e97c86"/>
<circle cx="464.28" cy="209.10" r="2.7" fill="#e97c86"/>
<circle cx="474.82" cy="209.10" r="4.6" fill="#e39d41"/>
<circle cx="474.82" cy="209.10" r="2.7" fill="#e97c86"/>
<circle cx="485.35" cy="209.10" r="4.6" fill="#e39d41"/>
<circle cx="485.35" cy="209.10" r="2.7" fill="#e97c86"/>
<circle cx="495.89" cy="209.10" r="4.6" fill="#e39d41"/>
<circle cx="495.89" cy="209.10" r="2.7" fill="#e97c86"/>
<circle cx="464.28" cy="230.17" r="4.6" fill="#3aa0c4"/>
<circle cx="464.28" cy="230.17" r="2.7" fill="#e8375b"/>
<circle cx="538.03" cy="103.75" r="4.6" fill="#e39d41"/>
<circle cx="538.03" cy="103.75" r="2.7" fill="#e97c86"/>
<circle cx="538.03" cy="114.28" r="4.6" fill="#e39d41"/>
<circle cx="538.03" cy="114.28" r="2.7" fill="#e97c86"/>
<circle cx="538.03" cy="124.82" r="4.6" fill="#e39d41"/>
<circle cx="538.03" cy="124.82" r="2.7" fill="#e97c86"/>
<circle cx="538.03" cy="135.35" r="2.7" fill="#e97c86"/>
<circle cx="538.03" cy="145.89" r="2.7" fill="#e97c86"/>
<circle cx="538.03" cy="156.42" r="2.7" fill="#e97c86"/>
<circle cx="538.03" cy="166.96" r="2.7" fill="#e97c86"/>
<circle cx="538.03" cy="177.49" r="2.7" fill="#e97c86"/>
<circle cx="559.10" cy="124.82" r="4.6" fill="#3aa0c4"/>
<circle cx="559.10" cy="124.82" r="2.7" fill="#e97c86"/>
<circle cx="559.10" cy="135.35" r="4.6" fill="#3aa0c4"/>
<circle cx="559.10" cy="135.35" r="2.7" fill="#e8375b"/>
<circle cx="569.63" cy="103.75" r="2.7" fill="#e97c86"/>
<circle cx="580.17" cy="114.28" r="4.6" fill="#e39d41"/>
<circle cx="580.17" cy="114.28" r="2.7" fill="#2e8f3a"/>
<circle cx="580.17" cy="124.82" r="4.6" fill="#e39d41"/>
<circle cx="580.17" cy="124.82" r="2.7" fill="#e8375b"/>
<circle cx="580.17" cy="135.35" r="4.6" fill="#e39d41"/>
<circle cx="580.17" cy="135.35" r="2.7" fill="#e8375b"/>
<circle cx="580.17" cy="145.89" r="4.6" fill="#e39d41"/>
<circle cx="580.17" cy="145.89" r="2.7" fill="#e8375b"/>
<circle cx="580.17" cy="156.42" r="4.6" fill="#e39d41"/>
<circle cx="580.17" cy="156.42" r="2.7" fill="#e8375b"/>
<circle cx="580.17" cy="166.96" r="4.6" fill="#e39d41"/>
<circle cx="580.17" cy="166.96" r="2.7" fill="#e8375b"/>
<circle cx="580.17" cy="177.49" r="4.6" fill="#e39d41"/>
<circle cx="580.17" cy="177.49" r="2.7" fill="#e8375b"/>
<circle cx="580.17" cy="188.03" r="2.7" fill="#e8375b"/>
<circle cx="822.47" cy="135.35" r="2.7" fill="#e8375b"/>
<circle cx="822.47" cy="145.89" r="4.6" fill="#e39d41"/>
<circle cx="822.47" cy="145.89" r="2.7" fill="#e8375b"/>
<circle cx="822.47" cy="156.42" r="4.6" fill="#e39d41"/>
<circle cx="822.47" cy="156.42" r="2.7" fill="#e8375b"/>
<circle cx="822.47" cy="166.96" r="4.6" fill="#e39d41"/>
<circle cx="822.47" cy="166.96" r="2.7" fill="#e8375b"/>
<circle cx="822.47" cy="177.49" r="4.6" fill="#e39d41"/>
<circle cx="822.47" cy="177.49" r="2.7" fill="#e8375b"/>
<circle cx="822.47" cy="188.03" r="4.6" fill="#e39d41"/>
<circle cx="822.47" cy="188.03" r="2.7" fill="#e8375b"/>
<circle cx="822.47" cy="198.56" r="4.6" fill="#e39d41"/>
<circle cx="822.47" cy="198.56" r="2.7" fill="#e8375b"/>
<circle cx="822.47" cy="209.10" r="4.6" fill="#e39d41"/>
<circle cx="822.47" cy="209.10" r="2.7" fill="#2e8f3a"/>
<circle cx="833.01" cy="219.63" r="2.7" fill="#e97c86"/>
<circle cx="843.54" cy="198.56" r="4.6" fill="#3aa0c4"/>
<circle cx="843.54" cy="198.56" r="2.7" fill="#e97c86"/>
<circle cx="822.47" cy="335.52" r="4.6" fill="#e39d41"/>
<circle cx="822.47" cy="335.52" r="2.7" fill="#2e8f3a"/>
<circle cx="822.47" cy="346.06" r="4.6" fill="#3aa0c4"/>
<circle cx="822.47" cy="346.06" r="2.7" fill="#2e8f3a"/>
<circle cx="885.68" cy="346.06" r="4.2" fill="#3aa0c4"/>
<circle cx="885.68" cy="346.06" r="2.7" fill="#2e8f3a"/>
<circle cx="885.68" cy="356.59" r="4.2" fill="#3aa0c4"/>
<circle cx="885.68" cy="356.59" r="2.7" fill="#2e8f3a"/>
<circle cx="917.29" cy="356.59" r="3.8" fill="#3aa0c4"/>
<circle cx="917.29" cy="356.59" r="2.7" fill="#2e8f3a"/>
<circle cx="896.22" cy="367.12" r="2.4" fill="#2e8f3a"/>
<circle cx="822.47" cy="409.26" r="4.6" fill="#e39d41"/>
<circle cx="822.47" cy="419.80" r="4.6" fill="#3aa0c4"/>
<circle cx="822.47" cy="419.80" r="2.7" fill="#2e8f3a"/>
<circle cx="885.68" cy="419.80" r="4.2" fill="#3aa0c4"/>
<circle cx="885.68" cy="419.80" r="2.7" fill="#2e8f3a"/>
<circle cx="885.68" cy="430.33" r="4.2" fill="#3aa0c4"/>
<circle cx="885.68" cy="430.33" r="2.7" fill="#2e8f3a"/>
<circle cx="917.29" cy="430.33" r="3.8" fill="#3aa0c4"/>
<circle cx="917.29" cy="430.33" r="2.7" fill="#2e8f3a"/>
<circle cx="896.22" cy="440.87" r="2.4" fill="#e97c86"/>
<circle cx="822.47" cy="472.48" r="4.6" fill="#e39d41"/>
<circle cx="822.47" cy="483.01" r="4.6" fill="#3aa0c4"/>
<circle cx="822.47" cy="483.01" r="2.7" fill="#2e8f3a"/>
<circle cx="885.68" cy="483.01" r="4.2" fill="#3aa0c4"/>
<circle cx="885.68" cy="483.01" r="2.7" fill="#2e8f3a"/>
<circle cx="885.68" cy="493.54" r="4.2" fill="#3aa0c4"/>
<circle cx="885.68" cy="493.54" r="2.7" fill="#2e8f3a"/>
<circle cx="917.29" cy="493.54" r="3.8" fill="#3aa0c4"/>
<circle cx="917.29" cy="493.54" r="2.7" fill="#2e8f3a"/>
<circle cx="896.22" cy="504.08" r="2.4" fill="#e97c86"/>
<circle cx="822.47" cy="535.68" r="4.6" fill="#e39d41"/>
<circle cx="822.47" cy="546.22" r="4.6" fill="#3aa0c4"/>
<circle cx="822.47" cy="546.22" r="2.7" fill="#2e8f3a"/>
<circle cx="885.68" cy="546.22" r="4.2" fill="#3aa0c4"/>
<circle cx="885.68" cy="546.22" r="2.7" fill="#2e8f3a"/>
<circle cx="885.68" cy="556.75" r="4.2" fill="#3aa0c4"/>
<circle cx="885.68" cy="556.75" r="2.7" fill="#2e8f3a"/>
<circle cx="917.29" cy="556.75" r="3.8" fill="#3aa0c4"/>
<circle cx="917.29" cy="556.75" r="2.7" fill="#2e8f3a"/>
<circle cx="896.22" cy="567.29" r="2.4" fill="#e97c86"/>
<circle cx="822.47" cy="598.89" r="4.6" fill="#e39d41"/>
<circle cx="822.47" cy="609.43" r="4.6" fill="#3aa0c4"/>
<circle cx="822.47" cy="609.43" r="2.7" fill="#2e8f3a"/>
<circle cx="885.68" cy="609.43" r="4.2" fill="#3aa0c4"/>
<circle cx="885.68" cy="609.43" r="2.7" fill="#2e8f3a"/>
<circle cx="885.68" cy="619.96" r="4.2" fill="#3aa0c4"/>
<circle cx="885.68" cy="619.96" r="2.7" fill="#2e8f3a"/>
<circle cx="917.29" cy="619.96" r="3.8" fill="#3aa0c4"/>
<circle cx="917.29" cy="619.96" r="2.7" fill="#2e8f3a"/>
<circle cx="896.22" cy="630.50" r="2.4" fill="#e97c86"/>
<circle cx="822.47" cy="662.11" r="4.6" fill="#e39d41"/>
<circle cx="822.47" cy="672.64" r="4.6" fill="#3aa0c4"/>
<circle cx="822.47" cy="672.64" r="2.7" fill="#2e8f3a"/>
<circle cx="885.68" cy="672.64" r="4.2" fill="#3aa0c4"/>
<circle cx="885.68" cy="672.64" r="2.7" fill="#2e8f3a"/>
<circle cx="885.68" cy="683.17" r="4.2" fill="#3aa0c4"/>
<circle cx="885.68" cy="683.17" r="2.7" fill="#2e8f3a"/>
<circle cx="917.29" cy="683.17" r="3.8" fill="#3aa0c4"/>
<circle cx="917.29" cy="683.17" r="2.7" fill="#6f8a6f"/>
<circle cx="896.22" cy="693.71" r="2.4" fill="#e97c86"/>
</g>
<g id="wlabels" font-family="'Liberation Mono',monospace" font-weight="bold" fill="#fff" text-anchor="middle">
<text transform="translate(917.3,334.0) rotate(90)" font-size="9.4" y="3.0">37</text>
<text transform="translate(917.3,407.4) rotate(90)" font-size="9.4" y="3.0">37</text>
<text transform="translate(917.3,439.5) rotate(90)" font-size="9.4" y="3.0">37</text>
<text transform="translate(917.3,502.8) rotate(90)" font-size="9.4" y="3.0">37</text>
<text transform="translate(811.9,358.2) rotate(-90)" font-size="9.4" y="3.0">37</text>
<text transform="translate(811.9,332.5) rotate(-90)" font-size="9.4" y="3.0">7</text>
<text transform="translate(811.9,463.6) rotate(90)" font-size="9.4" y="3.0">37</text>
<text transform="translate(811.9,526.8) rotate(-90)" font-size="9.4" y="3.0">37</text>
<text transform="translate(811.9,590.0) rotate(-90)" font-size="9.4" y="3.0">37</text>
<text transform="translate(811.9,653.3) rotate(-90)" font-size="9.4" y="3.0">37</text>
<text transform="translate(619.4,230.0) rotate(0)" font-size="9.4" y="3.0">0</text>
<text transform="translate(787.8,230.0) rotate(0)" font-size="9.4" y="3.0">0</text>
<rect x="840.1" y="208.7" width="6.8" height="4" rx="1.6" fill="#f4f8fa"/>
<text transform="translate(843.5,210.7) rotate(90)" font-size="5.4" y="1.8" fill="#2b7fa0">0</text>
</g>
</g>
</svg>
</div>
<div id="hdr">
<svg width="200" height="60" viewBox="0 0 200 60" style="position:absolute;left:0;top:0">
<g fill="#e2e2e2">
<circle cx="37.7" cy="30.8" r="11.3"/>
<rect x="44.70" y="26.00" width="7.7" height="9.6" rx="2.4" transform="rotate(0 37.7 30.8)"/><rect x="44.70" y="26.00" width="7.7" height="9.6" rx="2.4" transform="rotate(60 37.7 30.8)"/><rect x="44.70" y="26.00" width="7.7" height="9.6" rx="2.4" transform="rotate(120 37.7 30.8)"/><rect x="44.70" y="26.00" width="7.7" height="9.6" rx="2.4" transform="rotate(180 37.7 30.8)"/><rect x="44.70" y="26.00" width="7.7" height="9.6" rx="2.4" transform="rotate(240 37.7 30.8)"/><rect x="44.70" y="26.00" width="7.7" height="9.6" rx="2.4" transform="rotate(300 37.7 30.8)"/>
<circle cx="37.7" cy="30.8" r="5.5" fill="#2e2a3b"/>
<path d="M82.6 22.1 L106.6 22.1 Q107.6 22.1 108.2 23 L111.3 27.8 Q111.9 28.8 111.9 30 L111.9 36.1 Q111.9 37.9 110.1 37.9 L78.7 37.9 Q76.9 37.9 76.9 36.1 L76.9 30 Q76.9 28.8 77.5 27.8 L80.6 23 Q81.2 22.1 82.6 22.1 Z M83.9 24.5 L80.9 28.7 L88 28.7 L89.2 30.6 Q89.5 31 90.1 31 L98.7 31 Q99.3 31 99.6 30.6 L100.8 28.7 L107.9 28.7 L104.9 24.5 Z" fill-rule="evenodd"/>
</g>
</svg>
<div id="score">+255</div>
<div id="title">REGISTERS</div>
</div>

<div class="btn" style="left:5.3px;top:74.2px;width:47.4px;height:26.4px;border-radius:9px;"></div>
<div class="btn" style="left:5px;top:111.4px;width:48.7px;height:48.8px;"></div>
<div class="btn" style="left:5px;top:171.8px;width:48.7px;height:48.7px;"></div>
<div class="btn" style="left:3.7px;top:235.2px;width:49.1px;height:49.4px;"></div>
<div class="btn" style="left:3.7px;top:294.2px;width:49.1px;height:49.2px;"></div>
<svg width="60" height="300" viewBox="0 60 60 300" style="position:absolute;left:0;top:60px">
<g fill="none" stroke="#e2e2e2" stroke-linecap="round">
<circle cx="26.5" cy="85" r="6.1" stroke-width="2.2"/>
<path d="M31.4 89.9 L35.4 93.8" stroke-width="2.6"/>
<path d="M23.6 85.3 L29.2 85.3" stroke-width="2.1"/>
</g>
<path d="M26.6 121.4 L26.6 138.6 Q26.6 139.6 27.5 139 L38.5 130.6 Q39.3 129.9 38.5 129.2 L27.5 121 Q26.6 120.4 26.6 121.4 Z" fill="#e2e2e2" stroke="#e2e2e2" stroke-width="1.9" stroke-linejoin="round"/>
<path d="M34.2 187.9 L24.6 195.4 L34.2 202.8" fill="none" stroke="#e2e2e2" stroke-width="5.2" stroke-linecap="round" stroke-linejoin="round"/>
<g fill="#e2e2e2">
<rect x="18" y="253.6" width="19.9" height="1.9" rx="0.6"/>
<path d="M23.4 254 L24.6 250.6 Q24.9 249.8 25.8 249.8 L30.2 249.8 Q31.1 249.8 31.4 250.6 L32.6 254 L30.9 254 L30.1 251.4 L25.9 251.4 L25.1 254 Z"/>
<path fill-rule="evenodd" d="M19.3 256 L36.6 256 L36 270 Q35.9 271.7 34.2 271.7 L21.7 271.7 Q20 271.7 19.9 270 Z M22.9 257.8 L23.2 269.2 L25 269.2 L24.8 257.8 Z M27.05 257.8 L27.05 269.2 L28.85 269.2 L28.85 257.8 Z M31.1 257.8 L30.9 269.2 L32.7 269.2 L33 257.8 Z"/>
</g>
<g fill="none" stroke-width="6.5">
<path d="M34.65 310.61 A11.3 11.3 0 0 0 19.96 327.74" stroke="#eda73c"/>
<path d="M19.96 327.74 A11.3 11.3 0 0 0 34.65 310.61" stroke="#3d9fd6"/>
</g>
</svg>
<div id="hz">10.0Hz</div>

<div id="bottom"></div>
<div id="desc"><span class="cj" style="margin-right:-1.4px">从</span> REG 0 <span class="cj" style="margin-left:0.6px;margin-right:-2.8px">复制到</span> REG 0</div>
<div class="lbl" style="top:937px;">指令</div>
<div class="lbl" style="top:981.2px;">输入</div>
<div class="bit r" style="left:191px;top:938px;"></div>
<div class="bit r" style="left:241px;top:938px;"></div>
<div class="bit r" style="left:291px;top:938px;"></div>
<div class="bit r" style="left:341px;top:938px;"></div>
<div class="bit r" style="left:391px;top:938px;"></div>
<div class="bit r" style="left:441px;top:938px;"></div>
<div class="bit r" style="left:491px;top:938px;"></div>
<div class="bit r" style="left:541px;top:938px;"></div>
<div class="bit g" style="left:191px;top:990.5px;"></div>
<div class="bit r" style="left:241px;top:991px;"></div>
<div class="bit r" style="left:291px;top:991px;"></div>
<div class="bit g" style="left:341px;top:990.5px;"></div>
<div class="bit g" style="left:391px;top:990.5px;"></div>
<div class="bit r" style="left:441px;top:991px;"></div>
<div class="bit r" style="left:491px;top:991px;"></div>
<div class="bit g" style="left:541px;top:990.5px;"></div>
<div class="reg" style="left:643.3px;top:944.6px;">Reg 0: 37</div>
<div class="reg" style="left:828.5px;top:943px;">Reg 1: 140</div>
<div class="reg" style="left:1008.5px;top:943px;">Reg 2: 94</div>
<div class="reg" style="left:643.3px;top:980.3px;">Reg 3: 107</div>
<div class="reg" style="left:828.5px;top:978.8px;">Reg 4: 4</div>
<div class="reg" style="left:1008.5px;top:978.8px;">Reg 5: 65</div>
</body>
</html>
